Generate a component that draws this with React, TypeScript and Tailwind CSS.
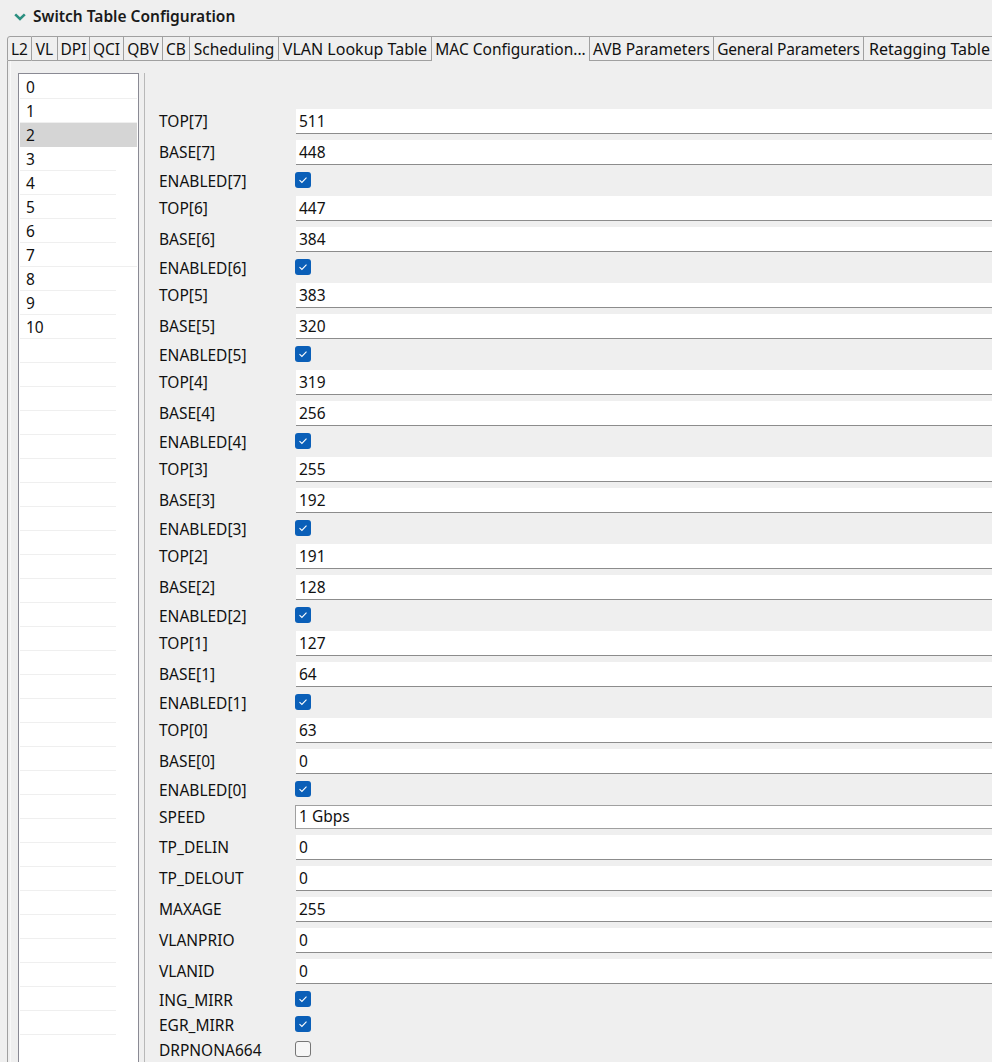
const tabs = [
  { label: "L2", w: "w-[25px]" },
  { label: "VL", w: "w-[26px]" },
  { label: "DPI", w: "w-[32px]" },
  { label: "QCI", w: "w-[34px]" },
  { label: "QBV", w: "w-[39px]" },
  { label: "CB", w: "w-[27px]" },
  { label: "Scheduling", w: "w-[89px]" },
  { label: "VLAN Lookup Table", w: "w-[153px] text-[16px]" },
  { label: "MAC Configuration...", w: "w-[158px]", active: true },
  { label: "AVB Parameters", w: "w-[124px]" },
  { label: "General Parameters", w: "w-[150px] tracking-[-0.15px]" },
  { label: "Retagging Table", w: "w-[132px] text-[16px]" },
];

const listRows = Array.from({ length: 40 }, (_, i) => i);

type Field =
  | { label: string; value: string; combo?: boolean }
  | { label: string; checked: boolean };

const fields: Field[] = [];
const tops = [511, 447, 383, 319, 255, 191, 127, 63];
tops.forEach((top, i) => {
  const n = 7 - i;
  fields.push({ label: `TOP[${n}]`, value: String(top) });
  fields.push({ label: `BASE[${n}]`, value: String(top - 63) });
  fields.push({ label: `ENABLED[${n}]`, checked: true });
});
fields.push(
  { label: "SPEED", value: "1 Gbps", combo: true },
  { label: "TP_DELIN", value: "0" },
  { label: "TP_DELOUT", value: "0" },
  { label: "MAXAGE", value: "255" },
  { label: "VLANPRIO", value: "0" },
  { label: "VLANID", value: "0" },
  { label: "ING_MIRR", checked: true },
  { label: "EGR_MIRR", checked: true },
  { label: "DRPNONA664", checked: false },
);

function Checkbox({ checked }: { checked: boolean }) {
  if (!checked) {
    return <div className="w-4 h-4 rounded-[3px] border border-[#767676] bg-[#f6f6f6]" />;
  }
  return (
    <div className="w-4 h-4 rounded-[3px] bg-[#0a5fb8] flex items-center justify-center">
      <svg width="10" height="8" viewBox="0 0 10 8" fill="none">
        <path d="M1.5 4.2 L3.9 6.4 L8.5 1.6" stroke="#ffffff" strokeWidth="1.1" />
      </svg>
    </div>
  );
}

function ListRow({ i }: { i: number }) {
  const selected = i === 2;
  const wide = i < 2 || i === 7;
  return (
    <div className={`relative h-6 pl-[6px] leading-[25px] ${selected ? "bg-[#d5d5d5]" : ""}`}>
      {i < 11 ? i : ""}
      {!selected && (
        <div className={`absolute left-0 bottom-0 h-[1px] bg-[#efefef] ${wide ? "w-[117px]" : "w-[96px]"}`} />
      )}
    </div>
  );
}

export default function App() {
  return (
    <div className="h-[1062px] w-[992px] overflow-hidden bg-[#efefef] text-[15.5px] text-[#111111] font-['Noto_Sans',sans-serif]">
      <div className="h-9 flex items-center pl-[14px] gap-[7px] pb-[3px]">
        <svg width="12" height="8" viewBox="0 0 12 8" fill="none">
          <path d="M1.2 1.4 L6 6 L10.8 1.4" stroke="#2b8f80" strokeWidth="2.6" />
        </svg>
        <span className="font-semibold text-[15.5px] text-[#1a1a1a]">Switch Table Configuration</span>
      </div>

      <div className="flex pl-[7px] h-[25px]">
        {tabs.map((t) => (
          <div
            key={t.label}
            className={`${t.w} shrink-0 h-[25px] border-t border-r border-[#a0a0a0] first:border-l first:rounded-tl-[3px] text-center leading-[24px] whitespace-nowrap ${
              t.active ? "" : "border-b"
            }`}
          >
            {t.label}
          </div>
        ))}
      </div>

      <div className="ml-[7px] border-l border-[#a0a0a0]">
        <div className="flex ml-[2px] pl-[7px] pt-[12px] border-l border-[#f8f8f8]">
          <div className="w-[121px] h-[1000px] shrink-0 border border-[#8a8a94] bg-white px-[1px] pt-[1px]">
            {listRows.map((i) => (
              <ListRow key={i} i={i} />
            ))}
          </div>

          <div className="w-[1px] h-[1000px] ml-[5px] bg-[#b8b8b8]" />

          <div className="flex-1 pl-[14px] pt-[36px]">
            {fields.map((f) =>
              "value" in f ? (
                <div key={f.label} className={`flex ${f.combo ? "h-[30px]" : "h-[31px]"}`}>
                  <div className="w-[136px] shrink-0 h-[25px] leading-[25px]">{f.label}</div>
                  {f.combo ? (
                    <div className="flex-1 h-[24px] bg-white border border-r-0 border-[#a0a0a0] pl-[3px] leading-[21px]">{f.value}</div>
                  ) : (
                    <div className="flex-1 ml-[1px] h-[25px] bg-white border-b border-[#8c8c8c] pl-[3px] leading-[25px]">{f.value}</div>
                  )}
                </div>
              ) : (
                <div key={f.label} className="flex h-[25px]">
                  <div className="w-[136px] shrink-0 h-[18px] leading-[20px]">{f.label}</div>
                  <div className="pt-[1px]">
                    <Checkbox checked={f.checked} />
                  </div>
                </div>
              ),
            )}
          </div>
        </div>
      </div>
    </div>
  );
}
